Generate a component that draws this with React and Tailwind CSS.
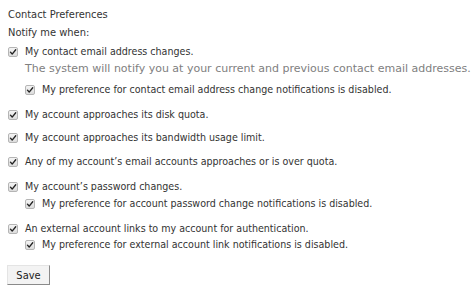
import React from "react";

const Check = () => (
  <span className="inline-flex items-center justify-center w-[10px] h-[10px] rounded-[2px] border border-[#b5b5b5] bg-gradient-to-b from-[#f4f4f4] to-[#dcdcdc] shrink-0">
    <svg viewBox="0 0 10 10" className="w-[8px] h-[8px]">
      <path d="M1.8 5.2 L4 7.6 L8.4 2.2" fill="none" stroke="#222" strokeWidth="1.7" strokeLinecap="round" strokeLinejoin="round" />
    </svg>
  </span>
);

const Row = ({ text, sub, className = "" }) => (
  <div className={`flex items-center h-[16px] ${sub ? "pl-[17px]" : ""} ${className}`}>
    <Check />
    <span className="ml-[7px] whitespace-nowrap">{text}</span>
  </div>
);

export default function App() {
  return (
    <div
      className="w-[474px] h-[288px] bg-white text-[#333] text-[10.6px] px-[8px] pt-[6px] overflow-hidden"
      style={{ fontFamily: "Tahoma, 'DejaVu Sans Condensed', 'DejaVu Sans', sans-serif" }}
    >
      <div className="leading-[17px] text-[11px]">Contact Preferences</div>
      <div className="leading-[17px] mt-[1px] text-[11px]">Notify me when:</div>
      <Row className="mt-[3px]" text="My contact email address changes." />
      <div
        className="h-[16px] leading-[16px] mt-[1px] pl-[17px] text-[#808080] whitespace-nowrap text-[11px]"
        style={{ fontFamily: "'DejaVu Sans', Verdana, sans-serif" }}
      >
        The system will notify you at your current and previous contact email addresses.
      </div>
      <Row sub className="mt-[5px]" text="My preference for contact email address change notifications is disabled." />
      <Row className="mt-[9px]" text="My account approaches its disk quota." />
      <Row className="mt-[7px]" text="My account approaches its bandwidth usage limit." />
      <Row className="mt-[8px]" text="Any of my account’s email accounts approaches or is over quota." />
      <Row className="mt-[9px]" text="My account’s password changes." />
      <Row sub className="mt-[1px]" text="My preference for account password change notifications is disabled." />
      <Row className="mt-[9px]" text="An external account links to my account for authentication." />
      <Row sub text="My preference for external account link notifications is disabled." />
      <button className="mt-[12px] -ml-[1px] h-[20px] w-[43px] bg-[#f3f3f3] border border-t-[#e4e4e4] border-l-[#e4e4e4] border-r-[#8a8a8a] border-b-[#8a8a8a] text-[11px] text-[#222] leading-none">
        Save
      </button>
    </div>
  );
}
